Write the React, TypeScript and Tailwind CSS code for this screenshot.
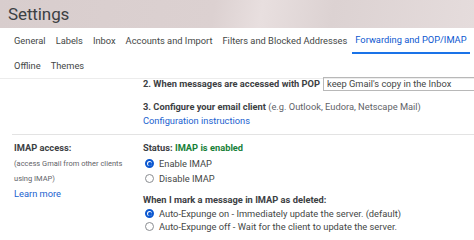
import React from "react";

function Radio({ checked }: { checked?: boolean }) {
  return checked ? (
    <span className="w-[9px] h-[9px] rounded-full border-[2px] border-[#0b57d0] bg-white flex items-center justify-center shrink-0">
      <span className="w-[4px] h-[4px] rounded-full bg-[#0b57d0]" />
    </span>
  ) : (
    <span className="w-[9px] h-[9px] rounded-full border border-[#8a8d91] bg-white shrink-0" />
  );
}

const tabs = ["General", "Labels", "Inbox", "Accounts and Import", "Filters and Blocked Addresses"];

export default function App() {
  return (
    <div className="w-[474px] h-[240px] overflow-hidden bg-white text-[#202124] whitespace-nowrap" style={{ fontFamily: "Roboto, 'Liberation Sans', sans-serif" }}>
      {/* header */}
      <div className="h-[28px] bg-[linear-gradient(100deg,#d8cdcd_0%,#dcd1d1_45%,#e8dfdf_55%,#dcd2d2_70%,#e5dcdc_100%)] pl-[8px] flex items-center">
        <h1 className="text-[17px] text-[#3c4043] leading-none tracking-[-0.1px]">Settings</h1>
      </div>

      {/* tabs */}
      <div className="border-b border-[#ececec] pl-[14px]">
        <div className="flex items-end h-[26px] gap-[10px] text-[9.3px] text-[#444746]">
          {tabs.map((t) => (
            <span key={t} className="pb-[6px]">{t}</span>
          ))}
          <span className="text-[#0b57d0] px-[3px] pb-[5px] border-b-2 border-[#1a73e8] ml-[-5px]">Forwarding and POP/IMAP</span>
        </div>
        <div className="flex gap-[10px] h-[24px] items-center text-[9.3px] text-[#444746]">
          <span>Offline</span>
          <span>Themes</span>
        </div>
      </div>

      {/* pop section remainder */}
      <div className="pl-[143px] text-[9.3px] mt-[-2px]">
        <div className="flex items-center h-[14px]">
          <span className="font-bold text-[#3c4043]">2. When messages are accessed with POP</span>
          <span className="ml-[3px] w-[200px] shrink-0 border border-[#b8b8b8] px-[3px] h-[14px] leading-[12px] text-[#444746]">keep Gmail's copy in the Inbox</span>
        </div>
        <div className="mt-[9px] leading-[14px]">
          <span className="font-bold text-[#3c4043]">3. Configure your email client</span>{" "}
          <span className="text-[#5f6368]">(e.g. Outlook, Eudora, Netscape Mail)</span>
        </div>
        <div className="leading-[14px] text-[#1a62d0]">Configuration instructions</div>
      </div>

      <div className="ml-[12px] mt-[6px] border-t border-[#e3e3e3]" />

      {/* imap section */}
      <div className="flex pt-[6px]">
        <div className="w-[143px] pl-[14px] shrink-0">
          <div className="text-[9.3px] font-bold text-[#3c4043] leading-[14px]">IMAP access:</div>
          <div className="text-[7.5px] text-[#5f6368] leading-[15px] mt-[1px]">(access Gmail from other clients<br />using IMAP)</div>
          <div className="text-[9.3px] text-[#1a62d0] leading-[16px]">Learn more</div>
        </div>
        <div className="text-[9.3px]">
          <div className="font-bold text-[#3c4043] leading-[14px]">
            Status: <span className="text-[#188038]">IMAP is enabled</span>
          </div>
          <div className="flex items-center gap-[5px] h-[15px] mt-[1px] pl-[2px] text-[#444746]">
            <Radio checked />
            <span>Enable IMAP</span>
          </div>
          <div className="flex items-center gap-[5px] h-[15px] pl-[2px] text-[#444746]">
            <Radio />
            <span>Disable IMAP</span>
          </div>
          <div className="font-bold text-[#3c4043] leading-[14px] mt-[7px]">When I mark a message in IMAP as deleted:</div>
          <div className="flex items-center gap-[5px] h-[13px] pl-[2px] text-[#444746]">
            <Radio checked />
            <span>Auto-Expunge on - Immediately update the server. (default)</span>
          </div>
          <div className="flex items-center gap-[5px] h-[13px] pl-[2px] text-[#444746]">
            <Radio />
            <span>Auto-Expunge off - Wait for the client to update the server.</span>
          </div>
        </div>
      </div>
    </div>
  );
}
